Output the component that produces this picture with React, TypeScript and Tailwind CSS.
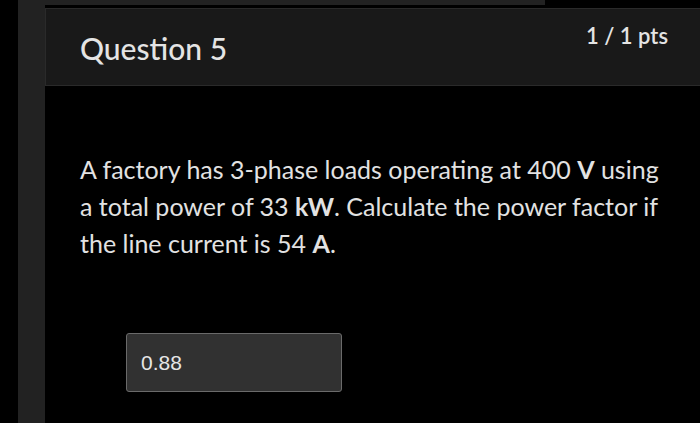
import React from "react";

export default function App() {
  return (
    <div className="w-[700px] h-[423px] bg-black flex overflow-hidden" style={{ fontFamily: "Lato, 'Noto Sans', sans-serif" }}>
      <div className="w-[18px] shrink-0 bg-black" />
      <div className="w-[27px] shrink-0 bg-[#222222]" />
      <div className="flex-1 flex flex-col">
        <div className="h-[5px] w-[500px] bg-[#222222]" />
        <div className="h-[3px]" />
        <div className="h-[78px] bg-[#191919] border-t border-l border-b border-[#2a2a2a] flex justify-between">
          <div className="pl-[34px] pt-[19px] text-[30px] leading-[40px] text-[#e4e4e4] font-medium">Question 5</div>
          <div className="pr-[32px] pt-[12px] text-[22px] leading-[30px] text-[#e4e4e4] font-semibold">1 / 1 pts</div>
        </div>
        <div className="pl-[35px] pr-[20px] pt-[65px] text-[25px] leading-[37px] text-[#e2e2e2]">
          <p className="w-[595px]">
            A factory has 3-phase loads operating at 400 <b className="font-bold">V</b> using a total power of 33 <b className="font-bold">kW</b>. Calculate the power factor if the line current is 54 <b className="font-bold">A</b>.
          </p>
          <div className="mt-[71px] ml-[46px] w-[216px] h-[59px] bg-[#313131] border border-[#6a6a6a] rounded-[3px] flex items-center pl-[14px]">
            <span className="text-[21px] text-[#e6e6e6]" style={{ fontFamily: "'Liberation Sans', Arial, sans-serif" }}>0.88</span>
          </div>
        </div>
      </div>
    </div>
  );
}
